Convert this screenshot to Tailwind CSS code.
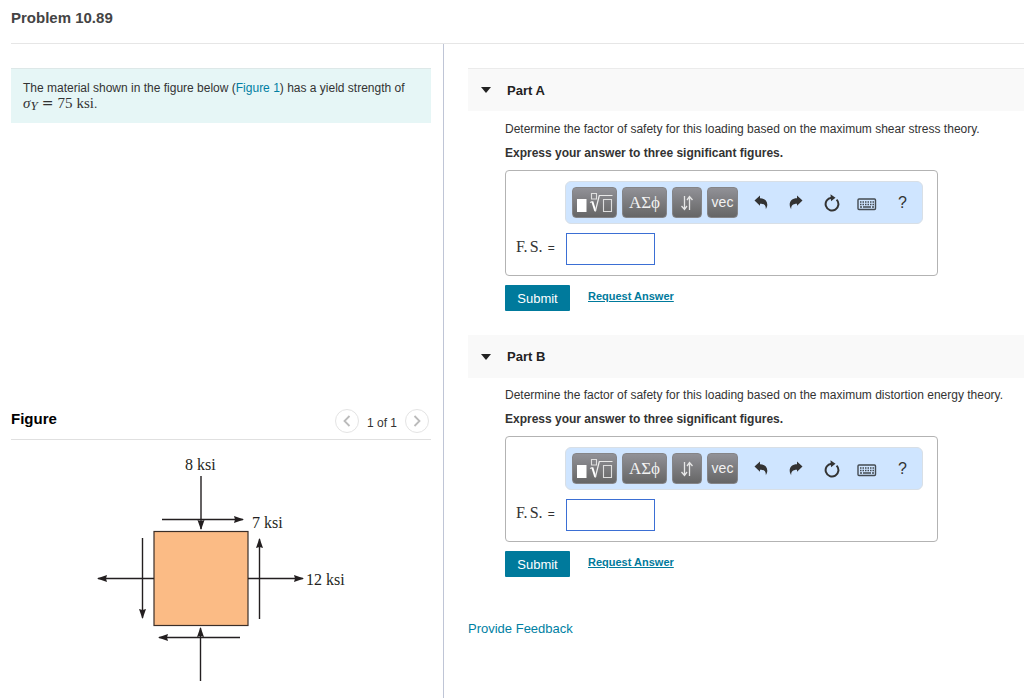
<!DOCTYPE html>
<html lang="en">
<head>
    <meta charset="UTF-8">
    <meta name="viewport" content="width=device-width, initial-scale=1.0">
    <title>Problem 10.89</title>
    <script src="https://cdn.jsdelivr.net/npm/@tailwindcss/browser@4"></script>
</head>
<body class="min-h-screen flex flex-col bg-white text-[#333] text-[12px] leading-[15px] font-['Liberation_Sans',Arial,sans-serif]">

    <!-- Shared icons -->
    <svg class="hidden">
        <symbol id="icon-template" viewBox="0 0 36 21">
            <rect x="0" y="7" width="9.500" height="13" fill="#fff"/>
            <path d="M14.500 1.500h5v5.500h-5zM26.500 7.500h8v12h-8z" fill="none" stroke="#dedede" stroke-width="1.100"/>
            <path d="M13 10.500l2.500-1M22 3.500h13.500" fill="none" stroke="#e8e8e8" stroke-width="1.200"/>
            <path d="M15.300 9.500l3 9.500" fill="none" stroke="#fff" stroke-width="2"/>
            <path d="M18.300 19.500l4-16" fill="none" stroke="#eee" stroke-width="1.200"/>
        </symbol>
        <symbol id="icon-arrows" viewBox="0 0 14 16">
            <path d="M4.500 1v13M1.500 11l3 3.500 2.500-3.500M9.500 15V2M12.500 5l-3-3.500L7 5" fill="none" stroke="#e6e6e6" stroke-width="1.300"/>
        </symbol>
        <symbol id="icon-undo" viewBox="0 0 14 15">
            <path d="M0.500 5.500L6 0.500v2.800c4.500 0 7.500 2.700 7.300 6.700-.1 1.800-.8 3-1.500 4.300.3-3.500-1.300-5.600-5.800-5.600v2z" fill="#333"/>
        </symbol>
        <symbol id="icon-redo" viewBox="0 0 14 15">
            <path d="M13.500 5.500L8 0.500v2.800C3.500 3.300.5 6 .7 10c.1 1.800.8 3 1.500 4.300C1.900 10.800 3.500 8.700 8 8.700v2z" fill="#333"/>
        </symbol>
        <symbol id="icon-reset" viewBox="0 0 16 18">
            <path d="M12.600 5.600A6.400 6.400 0 1 1 7.500 3.700" fill="none" stroke="#333" stroke-width="2"/>
            <path d="M6.500 0.300l5 3.400-4.500 3.600z" fill="#333"/>
        </symbol>
        <symbol id="icon-keyboard" viewBox="0 0 20 13">
            <rect x="1" y="1" width="17.500" height="10.500" rx="1" fill="none" stroke="#444b52" stroke-width="1.400"/>
            <path d="M3 4h14M3 6.500h14" stroke="#444b52" stroke-width="1.300" stroke-dasharray="1.500 1"/>
            <path d="M3 9h2M6 9h8M15 9h2" stroke="#444b52" stroke-width="1.500"/>
        </symbol>
    </svg>

    <header class="ml-[11px] h-11 pt-2 border-b border-[#e6e6e6]">
        <h1 class="text-[15px] leading-5 font-bold text-[#444]">Problem 10.89</h1>
    </header>

    <main class="flex flex-1">
        <!-- Problem statement and figure -->
        <section class="w-[444px] shrink-0 border-r border-[#bfc5d6] pl-[11px] pr-3 pt-6">
            <div class="min-h-[337px]">
                <div class="bg-[#e6f6f6] border-t border-[#dde8e8] pl-3 pt-3 pb-3 h-[55px]">
                    <p>The material shown in the figure below (<a href="#figure" class="text-[#007fa3]">Figure 1</a>) has a yield strength of</p>
                    <p class="flex items-baseline gap-1 font-['Liberation_Serif',serif] text-[15px]">
                        <span class="italic">σ<sub class="text-[13px] bottom-[-2px]">Y</sub></span>
                        <span class="font-['DejaVu_Serif',serif] text-[14px]">=</span>
                        <span>75</span>
                        <span>ksi<span class="font-['Liberation_Sans',sans-serif] text-[12px]">.</span></span>
                    </p>
                </div>
            </div>

            <div id="figure" class="flex justify-between items-start h-[35px] border-b border-[#e0e0e0]">
                <h2 class="text-[15px] leading-[27px] font-bold text-black">Figure</h2>
                <div class="flex items-center gap-2 mt-1 mr-[2px]">
                    <button aria-label="Previous figure" class="size-6 rounded-full border border-[#e4e4e4] flex items-center justify-center">
                        <svg class="w-2 h-3" viewBox="0 0 8 12"><path d="M6.500 1L1.500 6l5 5" fill="none" stroke="#bbb" stroke-width="1.800"/></svg>
                    </button>
                    <span class="pt-1">1 of 1</span>
                    <button aria-label="Next figure" class="size-6 rounded-full border border-[#e4e4e4] flex items-center justify-center">
                        <svg class="w-2 h-3" viewBox="0 0 8 12"><path d="M1.500 1l5 5-5 5" fill="none" stroke="#bbb" stroke-width="1.800"/></svg>
                    </button>
                </div>
            </div>

            <!-- Stress element -->
            <svg class="block w-[420px] h-[250px]" viewBox="11 440 420 250" role="img" aria-label="Stress element">
                <defs>
                    <marker id="head" viewBox="0 0 10 8" refX="9" refY="4" markerWidth="10" markerHeight="8" markerUnits="userSpaceOnUse" orient="auto">
                        <path d="M0 0.500L10 4 0 7.500 1 4z" fill="#231f20"/>
                    </marker>
                </defs>
                <rect x="154" y="531.500" width="94" height="94" fill="#fbbb85" stroke="#3a2e28" stroke-width="1.200"/>
                <g stroke="#231f20" stroke-width="1.400">
                    <path d="M201 476V529" marker-end="url(#head)"/>
                    <path d="M162 519.500H243" marker-end="url(#head)"/>
                    <path d="M142.500 538V618" marker-end="url(#head)"/>
                    <path d="M154 578.500H98" marker-end="url(#head)"/>
                    <path d="M248 578.500H303" marker-end="url(#head)"/>
                    <path d="M259.500 619V539" marker-end="url(#head)"/>
                    <path d="M240 637.500H159" marker-end="url(#head)"/>
                    <path d="M200.500 681V628" marker-end="url(#head)"/>
                </g>
                <g font-family="Liberation Serif, serif" font-size="16" fill="#231f20">
                    <text x="185" y="470">8 ksi</text>
                    <text x="252" y="528">7 ksi</text>
                    <text x="306" y="585">12 ksi</text>
                </g>
            </svg>
        </section>

        <!-- Answer parts -->
        <section class="flex-1 min-w-0 pl-6 pt-6">
            <article class="pb-6">
                <h2 class="flex items-center h-[43px] pl-[13px] gap-4 bg-[#f9f9f9] border-t border-[#ebebeb] text-[13px] font-bold text-[#222]">
                    <svg class="w-[10px] h-[6px]" viewBox="0 0 10 6"><path d="M0 0h10L5 6z" fill="#222"/></svg>
                    Part A
                </h2>
                <div class="pl-[37px] pt-[11px]">
                    <p class="whitespace-nowrap">Determine the factor of safety for this loading based on the maximum shear stress theory.</p>
                    <p class="mt-[9px] font-bold">Express your answer to three significant figures.</p>
                    <div class="mt-[9px] w-[433px] h-[106px] border border-[#b3b3b3] rounded pt-[10px] pl-[10px]">
                        <div class="ml-[49px] w-[358px] h-[43px] flex items-center pl-[6px] bg-[#cfe5ff] border border-[#d8dfe6] rounded-md">
                            <div class="flex shrink-0 gap-[5px] mr-[5px] text-[#f2f2f2]">
                                <button aria-label="Templates" class="w-[45px] h-[31px] rounded bg-linear-to-b from-[#919197] to-[#666] border border-[#858588] flex items-center justify-center"><svg class="w-9 h-[21px]"><use href="#icon-template"/></svg></button>
                                <button class="w-[45px] h-[31px] rounded bg-linear-to-b from-[#919197] to-[#666] border border-[#858588] font-['Liberation_Serif',serif] text-[17px]">ΑΣϕ</button>
                                <button aria-label="Arrows" class="w-[30px] h-[31px] rounded bg-linear-to-b from-[#919197] to-[#666] border border-[#858588] flex items-center justify-center"><svg class="w-[14px] h-4"><use href="#icon-arrows"/></svg></button>
                                <button class="w-[31px] h-[31px] rounded bg-linear-to-b from-[#919197] to-[#666] border border-[#858588] text-[14px] flex justify-center items-center">vec</button>
                            </div>
                            <button aria-label="Undo" class="w-[35px] shrink-0 flex justify-center"><svg class="w-[14px] h-[15px]"><use href="#icon-undo"/></svg></button>
                            <button aria-label="Redo" class="w-9 shrink-0 flex justify-center"><svg class="w-[14px] h-[15px]"><use href="#icon-redo"/></svg></button>
                            <button aria-label="Reset" class="w-[35px] shrink-0 flex justify-center"><svg class="w-4 h-[18px]"><use href="#icon-reset"/></svg></button>
                            <button aria-label="Keyboard" class="w-9 shrink-0 pt-[3px] flex justify-center"><svg class="w-5 h-[13px]"><use href="#icon-keyboard"/></svg></button>
                            <button aria-label="Help" class="w-[35px] shrink-0 text-[16px]">?</button>
                        </div>
                        <div class="flex items-start mt-[9px]">
                            <label for="answerA" class="w-[50px] pt-[6px] whitespace-nowrap"><span class="font-['Liberation_Serif',serif] text-[16px]">F.<span class="mx-[2px]">S.</span></span> =</label>
                            <input id="answerA" type="text" class="w-[89px] h-8 border border-[#3b6fd4] bg-white px-1">
                        </div>
                    </div>
                    <div class="mt-[9px] flex items-center gap-[18px]">
                        <button class="w-[65px] h-[26px] bg-[#007a9c] text-white text-[13px] rounded-[1px]">Submit</button>
                        <a href="#" class="pb-[3px] text-[11px] font-bold underline text-[#007a9c]">Request Answer</a>
                    </div>
                </div>
            </article>

            <article class="pb-6">
                <h2 class="flex items-center h-[43px] pl-[13px] gap-4 bg-[#f9f9f9] text-[13px] font-bold text-[#222]">
                    <svg class="w-[10px] h-[6px]" viewBox="0 0 10 6"><path d="M0 0h10L5 6z" fill="#222"/></svg>
                    Part B
                </h2>
                <div class="pl-[37px] pt-[10px]">
                    <p class="whitespace-nowrap">Determine the factor of safety for this loading based on the maximum distortion energy theory.</p>
                    <p class="mt-[9px] font-bold">Express your answer to three significant figures.</p>
                    <div class="mt-[9px] w-[433px] h-[106px] border border-[#b3b3b3] rounded pt-[10px] pl-[10px]">
                        <div class="ml-[49px] w-[358px] h-[43px] flex items-center pl-[6px] bg-[#cfe5ff] border border-[#d8dfe6] rounded-md">
                            <div class="flex shrink-0 gap-[5px] mr-[5px] text-[#f2f2f2]">
                                <button aria-label="Templates" class="w-[45px] h-[31px] rounded bg-linear-to-b from-[#919197] to-[#666] border border-[#858588] flex items-center justify-center"><svg class="w-9 h-[21px]"><use href="#icon-template"/></svg></button>
                                <button class="w-[45px] h-[31px] rounded bg-linear-to-b from-[#919197] to-[#666] border border-[#858588] font-['Liberation_Serif',serif] text-[17px]">ΑΣϕ</button>
                                <button aria-label="Arrows" class="w-[30px] h-[31px] rounded bg-linear-to-b from-[#919197] to-[#666] border border-[#858588] flex items-center justify-center"><svg class="w-[14px] h-4"><use href="#icon-arrows"/></svg></button>
                                <button class="w-[31px] h-[31px] rounded bg-linear-to-b from-[#919197] to-[#666] border border-[#858588] text-[14px] flex justify-center items-center">vec</button>
                            </div>
                            <button aria-label="Undo" class="w-[35px] shrink-0 flex justify-center"><svg class="w-[14px] h-[15px]"><use href="#icon-undo"/></svg></button>
                            <button aria-label="Redo" class="w-9 shrink-0 flex justify-center"><svg class="w-[14px] h-[15px]"><use href="#icon-redo"/></svg></button>
                            <button aria-label="Reset" class="w-[35px] shrink-0 flex justify-center"><svg class="w-4 h-[18px]"><use href="#icon-reset"/></svg></button>
                            <button aria-label="Keyboard" class="w-9 shrink-0 pt-[3px] flex justify-center"><svg class="w-5 h-[13px]"><use href="#icon-keyboard"/></svg></button>
                            <button aria-label="Help" class="w-[35px] shrink-0 text-[16px]">?</button>
                        </div>
                        <div class="flex items-start mt-[9px]">
                            <label for="answerB" class="w-[50px] pt-[6px] whitespace-nowrap"><span class="font-['Liberation_Serif',serif] text-[16px]">F.<span class="mx-[2px]">S.</span></span> =</label>
                            <input id="answerB" type="text" class="w-[89px] h-8 border border-[#3b6fd4] bg-white px-1">
                        </div>
                    </div>
                    <div class="mt-[9px] flex items-center gap-[18px]">
                        <button class="w-[65px] h-[26px] bg-[#007a9c] text-white text-[13px] rounded-[1px]">Submit</button>
                        <a href="#" class="pb-[3px] text-[11px] font-bold underline text-[#007a9c]">Request Answer</a>
                    </div>
                </div>
            </article>

            <a href="#" class="inline-block mt-5 text-[13px] text-[#007fa3]">Provide Feedback</a>
        </section>
    </main>
</body>
</html>
